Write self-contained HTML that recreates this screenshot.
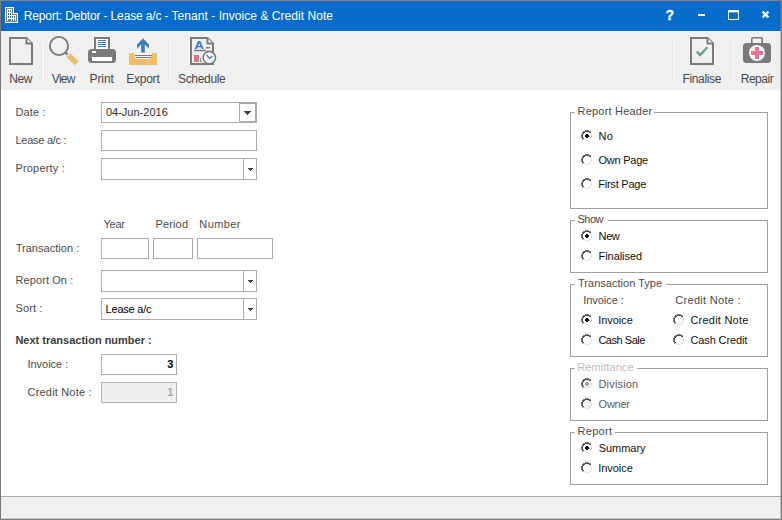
<!DOCTYPE html>
<html lang="en">
<head>
<meta charset="utf-8">
<title>Report: Debtor - Lease a/c - Tenant - Invoice &amp; Credit Note</title>
<style>
html,body{margin:0;padding:0;}
body{width:782px;height:520px;overflow:hidden;background:#fff;font-family:"Liberation Sans",sans-serif;font-size:11px;color:#404040;}
#win{position:absolute;left:0;top:0;width:782px;height:520px;overflow:hidden;background:#fff;}
#win *{box-sizing:border-box;}
.abs{position:absolute;}
#titlebar{position:absolute;left:0;top:0;width:782px;height:31px;background:#066ccb;}
.ttl{position:absolute;height:16px;line-height:16px;font-size:12px;color:#fff;white-space:pre;}
.q{position:absolute;height:18px;line-height:18px;font-size:14px;font-weight:bold;color:#fff;-webkit-text-stroke:0.4px #fff;white-space:nowrap;}
#toolbar{position:absolute;left:0;top:31px;width:782px;height:59px;background:#f0f0f0;}
.tbl{position:absolute;height:16px;line-height:16px;font-size:12px;color:#484848;white-space:nowrap;}
.sep{position:absolute;top:41px;width:3px;height:39px;background:#e6e6e6;border-right:2px solid #f6f6f6;}
.lbl{position:absolute;height:14px;line-height:14px;white-space:nowrap;color:#4a4a4a;}
.lbl.b{color:#3c3c3c;}
.b{font-weight:bold;}
.inp{position:absolute;border:1px solid #ababab;background:#fff;height:21px;}
.inp.off{background:#efefef;border-color:#b4b4b4;}
.txt{position:absolute;height:14px;line-height:14px;color:#2c2c2c;white-space:nowrap;}
.dd{position:absolute;right:0;top:0;bottom:0;width:13px;border-left:1px solid #ababab;}
.dd svg{position:absolute;left:4px;top:9px;}
.ddb{position:absolute;right:0;top:0;bottom:0;width:17px;border:1px solid #ababab;}
.ddb svg{position:absolute;left:4px;top:7px;}
.grp{position:absolute;left:570px;width:198px;border:1px solid #a0a0a0;}
.gap{position:absolute;left:575px;height:3px;background:#fff;}
.cap{position:absolute;height:14px;line-height:14px;white-space:nowrap;color:#4a4a4a;}
.cap.off{color:#bcbcbc;}
.rad{position:absolute;width:12px;height:12px;}
.rad:before,.rad:after{content:"";position:absolute;left:-1px;top:-1px;width:1px;height:1px;}
.rad:before{box-shadow:5px 1px #808080,6px 1px #808080,7px 1px #808080,8px 1px #808080,3px 2px #808080,4px 2px #808080,5px 2px #4a4a4a,6px 2px #4a4a4a,7px 2px #4a4a4a,8px 2px #4a4a4a,9px 2px #808080,10px 2px #808080,2px 3px #808080,3px 3px #4a4a4a,4px 3px #4a4a4a,9px 3px #4a4a4a,10px 3px #4a4a4a,2px 4px #808080,3px 4px #4a4a4a,10px 4px #e0e0e0,1px 5px #808080,2px 5px #4a4a4a,11px 5px #e0e0e0,1px 6px #808080,2px 6px #4a4a4a,11px 6px #e0e0e0,1px 7px #808080,2px 7px #4a4a4a,11px 7px #e0e0e0,1px 8px #808080,2px 8px #4a4a4a,11px 8px #e0e0e0,2px 9px #808080,3px 9px #4a4a4a,10px 9px #e0e0e0,2px 10px #808080,3px 10px #e0e0e0,4px 10px #e0e0e0,9px 10px #e0e0e0,10px 10px #e0e0e0,5px 11px #e0e0e0,6px 11px #e0e0e0,7px 11px #e0e0e0,8px 11px #e0e0e0;}
.rad.dis:before{box-shadow:5px 1px #808080,6px 1px #808080,7px 1px #808080,8px 1px #808080,3px 2px #808080,4px 2px #808080,5px 2px #4a4a4a,6px 2px #4a4a4a,7px 2px #4a4a4a,8px 2px #4a4a4a,9px 2px #808080,10px 2px #808080,2px 3px #808080,3px 3px #4a4a4a,4px 3px #4a4a4a,5px 3px #f0f0f0,6px 3px #f0f0f0,7px 3px #f0f0f0,8px 3px #f0f0f0,9px 3px #4a4a4a,10px 3px #4a4a4a,2px 4px #808080,3px 4px #4a4a4a,4px 4px #f0f0f0,5px 4px #f0f0f0,6px 4px #f0f0f0,7px 4px #f0f0f0,8px 4px #f0f0f0,9px 4px #f0f0f0,10px 4px #e0e0e0,1px 5px #808080,2px 5px #4a4a4a,3px 5px #f0f0f0,4px 5px #f0f0f0,5px 5px #f0f0f0,6px 5px #f0f0f0,7px 5px #f0f0f0,8px 5px #f0f0f0,9px 5px #f0f0f0,10px 5px #f0f0f0,11px 5px #e0e0e0,1px 6px #808080,2px 6px #4a4a4a,3px 6px #f0f0f0,4px 6px #f0f0f0,5px 6px #f0f0f0,6px 6px #f0f0f0,7px 6px #f0f0f0,8px 6px #f0f0f0,9px 6px #f0f0f0,10px 6px #f0f0f0,11px 6px #e0e0e0,1px 7px #808080,2px 7px #4a4a4a,3px 7px #f0f0f0,4px 7px #f0f0f0,5px 7px #f0f0f0,6px 7px #f0f0f0,7px 7px #f0f0f0,8px 7px #f0f0f0,9px 7px #f0f0f0,10px 7px #f0f0f0,11px 7px #e0e0e0,1px 8px #808080,2px 8px #4a4a4a,3px 8px #f0f0f0,4px 8px #f0f0f0,5px 8px #f0f0f0,6px 8px #f0f0f0,7px 8px #f0f0f0,8px 8px #f0f0f0,9px 8px #f0f0f0,10px 8px #f0f0f0,11px 8px #e0e0e0,2px 9px #808080,3px 9px #4a4a4a,4px 9px #f0f0f0,5px 9px #f0f0f0,6px 9px #f0f0f0,7px 9px #f0f0f0,8px 9px #f0f0f0,9px 9px #f0f0f0,10px 9px #e0e0e0,2px 10px #808080,3px 10px #e0e0e0,4px 10px #e0e0e0,5px 10px #f0f0f0,6px 10px #f0f0f0,7px 10px #f0f0f0,8px 10px #f0f0f0,9px 10px #e0e0e0,10px 10px #e0e0e0,5px 11px #e0e0e0,6px 11px #e0e0e0,7px 11px #e0e0e0,8px 11px #e0e0e0;}
.rad.on:after{box-shadow:6px 5px #000,7px 5px #000,5px 6px #000,6px 6px #000,7px 6px #000,8px 6px #000,5px 7px #000,6px 7px #000,7px 7px #000,8px 7px #000,6px 8px #000,7px 8px #000;}
.rad.on.dis:after{box-shadow:6px 5px #a0a0a0,7px 5px #a0a0a0,5px 6px #a0a0a0,6px 6px #a0a0a0,7px 6px #a0a0a0,8px 6px #a0a0a0,5px 7px #a0a0a0,6px 7px #a0a0a0,7px 7px #a0a0a0,8px 7px #a0a0a0,6px 8px #a0a0a0,7px 8px #a0a0a0;}
.rl{position:absolute;height:14px;line-height:14px;white-space:nowrap;color:#101010;}
.rl.off{color:#5a5a5a;}
#status{position:absolute;left:0;top:496px;width:782px;height:24px;background:#f0f0f0;border-top:1px solid #ababab;}
#status:after{content:"";position:absolute;left:1px;top:0;right:2px;bottom:2px;border-right:1px solid #f5f5f5;border-bottom:1px solid #f5f5f5;}
#frame{position:absolute;left:0;top:0;width:782px;height:520px;border:1px solid #7a7a7a;border-top-color:#8f8478;border-right-color:#808080;border-bottom-color:#808080;pointer-events:none;}
#frame:after{content:"";position:absolute;left:0;top:0;right:0;bottom:0;border-right:1px solid rgba(128,128,128,.45);border-bottom:1px solid rgba(128,128,128,.45);}
</style>
</head>
<body>
<div id="win">
<div id="titlebar"></div>
<div id="toolbar"></div>
<div class="sep" style="left:41px"></div>
<div class="sep" style="left:168px"></div>
<div class="sep" style="left:672px"></div>
<div class="sep" style="left:731px"></div>
<svg id="icons" class="abs" style="left:0;top:0" width="782" height="90" viewBox="0 0 782 90">
    <!-- app icon -->
    <g shape-rendering="crispEdges">
      <path d="M5,7H14V13H18V23H5Z" fill="#fff"/>
      <path d="M6.5,8.5H12.5V14.5H16.5V21.5H6.5Z" fill="#fff" stroke="#7f7f7f" stroke-width="1"/>
      <g fill="#2f74c0">
        <rect x="8" y="10" width="1" height="2"/><rect x="10" y="10" width="1" height="2"/>
        <rect x="8" y="13" width="1" height="2"/><rect x="10" y="13" width="1" height="2"/>
        <rect x="8" y="16" width="1" height="2"/><rect x="10" y="16" width="1" height="2"/><rect x="12" y="16" width="1" height="2"/><rect x="14" y="16" width="1" height="2"/>
        <rect x="12" y="19" width="1" height="2"/><rect x="14" y="19" width="1" height="2"/>
      </g>
      <rect x="8" y="19" width="3" height="2" fill="#7f7f7f"/>
    </g>
    <!-- window buttons -->
    <g fill="#fff" shape-rendering="crispEdges">
      <rect x="698" y="14" width="7" height="2"/>
      <path d="M728,10H739V20H728Z M729,12V19H738V12Z" fill-rule="evenodd"/>
      <rect x="729" y="12" width="9" height="1" fill-opacity="0.35"/>
    </g>
    <path d="M763.4,12.4L767.6,16.6M767.6,12.4L763.4,16.6" stroke="#fff" stroke-width="2.2" stroke-linecap="square" fill="none"/>
    <!-- New -->
    <g fill="none" stroke="#7a7a7a" stroke-width="2">
      <path d="M10,38H26.5L32,43.5V64H10Z"/>
      <path d="M26.5,38V43.5H32" fill="#fff"/>
    </g>
    <!-- View -->
    <circle cx="59" cy="46" r="9.1" fill="none" stroke="#767676" stroke-width="1.8"/>
    <path d="M65.2,52.2L67.5,54.5" stroke="#767676" stroke-width="2.4"/>
    <path d="M68.3,55.3L76.7,63.3" stroke="#edbf6a" stroke-width="5.6"/>
    <!-- Print -->
    <g>
      <rect x="95" y="38" width="14" height="12" fill="#fff" stroke="#7a7a7a" stroke-width="2"/>
      <rect x="88" y="49" width="28" height="14" rx="3.5" fill="#7a7a7a"/>
      <g shape-rendering="crispEdges">
        <rect x="92" y="57" width="20" height="4" fill="#fff"/>
        <rect x="92" y="51" width="4" height="2" fill="#fff"/>
        <g fill="#3f7cc4"><rect x="98" y="40" width="8" height="1"/><rect x="98" y="42" width="8" height="1"/><rect x="98" y="44" width="8" height="1"/><rect x="98" y="46" width="8" height="1"/></g>
      </g>
    </g>
    <!-- Export -->
    <g>
      <path d="M129,53H133.5Q134.5,53 134.8,54L136,58Q136.3,59 137.3,59H148.7Q149.7,59 150,58L151.2,54Q151.5,53 152.5,53H157V65H129Z" fill="#edbf6a"/>
      <path d="M134,53.5H152L150.3,58.5H135.7Z" fill="#f5f5f5"/>
      <rect x="134.5" y="55" width="17" height="1" fill="#7a7a7a" shape-rendering="crispEdges"/>
      <rect x="135.5" y="57" width="15" height="1" fill="#7a7a7a" shape-rendering="crispEdges"/>
      <path d="M143,38.3L149,44.8V48.6L144.8,44.6V52.6H141.2V44.6L137,48.6V44.8Z" fill="#3f78bd"/>
    </g>
    <!-- Schedule -->
    <g>
      <path d="M191,38H207.5L213,43.5V64H191Z" fill="none" stroke="#7a7a7a" stroke-width="2"/>
      <path d="M207.5,38V43.5H213" fill="#fff" stroke="#7a7a7a" stroke-width="2"/>
      <text x="194.2" y="48.6" font-family="'Liberation Sans',sans-serif" font-weight="bold" font-size="11.5" fill="#3f78bd" textLength="9.6" lengthAdjust="spacingAndGlyphs">A</text>
      <rect x="194" y="49.8" width="12" height="1.5" fill="#7a7a7a"/>
      <rect x="206" y="47" width="4" height="1.5" fill="#7a7a7a"/>
      <rect x="194" y="55" width="5" height="7" fill="#e6708c"/>
      <path d="M200.5,58V61.5H202" stroke="#5aa287" stroke-width="1" fill="none"/>
      <circle cx="209.3" cy="57.6" r="6.2" fill="#f6f6f6" stroke="#7a7a7a" stroke-width="1.6"/>
      <path d="M206.5,54.8L209.3,58.2L212.6,56.4" fill="none" stroke="#3f78bd" stroke-width="1.3"/>
    </g>
    <!-- Finalise -->
    <g>
      <path d="M691,38H707.5L713,43.5V64H691Z" fill="none" stroke="#7a7a7a" stroke-width="2"/>
      <path d="M707.5,38V43.5H713" fill="#fff" stroke="#7a7a7a" stroke-width="2"/>
      <path d="M696.8,51.6L700.2,55L707.4,47.2" fill="none" stroke="#5fa68e" stroke-width="2.4"/>
    </g>
    <!-- Repair -->
    <g>
      <path d="M751.8,43V38.6Q751.8,37.8 752.6,37.8H761.4Q762.2,37.8 762.2,38.6V43" fill="none" stroke="#7a7a7a" stroke-width="1.6"/>
      <rect x="743" y="43" width="28" height="20" rx="3.5" fill="#7a7a7a"/>
      <circle cx="757" cy="53" r="8" fill="#fafafa"/>
      <path d="M755,47H759V51H763V55H759V59H755V55H751V51H755Z" fill="#e8738f"/>
    </g>
  </svg>
<div class="ttl" id="t_title1" style="left:23.81px;top:8px;letter-spacing:-0.151px;">Report: Debtor - Lease a/c - </div>
<div class="ttl" id="t_title2" style="left:171.59px;top:8px;letter-spacing:0.045px;">Tenant - Invoice &amp; Credit Note</div>
<div class="q" id="t_q" style="left:665.42px;top:6px;">?</div>
<div class="tbl" id="t_tb_new" style="left:9.36px;top:71px;letter-spacing:-0.531px;">New</div>
<div class="tbl" id="t_tb_view" style="left:51.86px;top:71px;letter-spacing:-0.766px;">View</div>
<div class="tbl" id="t_tb_print" style="left:89.45px;top:71px;letter-spacing:-0.052px;">Print</div>
<div class="tbl" id="t_tb_export" style="left:126.16px;top:71px;letter-spacing:-0.225px;">Export</div>
<div class="tbl" id="t_tb_sched" style="left:178.04px;top:71px;letter-spacing:-0.332px;">Schedule</div>
<div class="tbl" id="t_tb_fin" style="left:682.49px;top:71px;letter-spacing:-0.362px;">Finalise</div>
<div class="tbl" id="t_tb_rep" style="left:740.68px;top:71px;letter-spacing:-0.455px;">Repair</div>
<div class="lbl" id="t_date" style="left:15.48px;top:105px;letter-spacing:0.117px;">Date :</div>
<div class="inp" style="left:101px;top:102px;width:156px;height:21px;"><span class="txt" id="t_dateval" style="left:3.94px;top:2px;letter-spacing:0.004px;">04-Jun-2016</span><span class="ddb"><svg width="7" height="4" viewBox="0 0 7 4" shape-rendering="crispEdges"><path d="M0,0H7V1H6V2H5V3H4V4H3V3H2V2H1V1H0Z" fill="#404040"/></svg></span></div>
<div class="lbl" id="t_lease" style="left:15.44px;top:133px;letter-spacing:-0.258px;">Lease a/c :</div>
<div class="inp" style="left:101px;top:130px;width:156px;height:21px;"></div>
<div class="lbl" id="t_prop" style="left:15.44px;top:161px;letter-spacing:0.182px;">Property :</div>
<div class="inp" style="left:101px;top:158px;width:156px;height:22px;"><span class="dd"><svg width="5" height="3" viewBox="0 0 5 3" shape-rendering="crispEdges"><path d="M0,0H5V1H4V2H3V3H2V2H1V1H0Z" fill="#404040"/></svg></span></div>
<div class="lbl" id="t_year" style="left:103.51px;top:217px;letter-spacing:-0.246px;">Year</div>
<div class="lbl" id="t_period" style="left:155.45px;top:217px;letter-spacing:0.155px;">Period</div>
<div class="lbl" id="t_number" style="left:199.35px;top:217px;letter-spacing:0.373px;">Number</div>
<div class="lbl" id="t_trans" style="left:15.63px;top:241px;letter-spacing:0.036px;">Transaction :</div>
<div class="inp" style="left:101px;top:238px;width:48px;height:21px;"></div>
<div class="inp" style="left:153px;top:238px;width:40px;height:21px;"></div>
<div class="inp" style="left:197px;top:238px;width:76px;height:21px;"></div>
<div class="lbl" id="t_repon" style="left:15.46px;top:273px;letter-spacing:0.098px;">Report On :</div>
<div class="inp" style="left:101px;top:270px;width:156px;height:22px;"><span class="dd"><svg width="5" height="3" viewBox="0 0 5 3" shape-rendering="crispEdges"><path d="M0,0H5V1H4V2H3V3H2V2H1V1H0Z" fill="#404040"/></svg></span></div>
<div class="lbl" id="t_sort" style="left:15.51px;top:301px;letter-spacing:0.125px;">Sort :</div>
<div class="inp" style="left:101px;top:298px;width:156px;height:22px;"><span class="txt" id="t_sortval" style="left:3.59px;top:3px;letter-spacing:-0.217px;color:#000;">Lease a/c</span><span class="dd"><svg width="5" height="3" viewBox="0 0 5 3" shape-rendering="crispEdges"><path d="M0,0H5V1H4V2H3V3H2V2H1V1H0Z" fill="#404040"/></svg></span></div>
<div class="lbl b" id="t_next" style="left:15.41px;top:333px;">Next transaction number :</div>
<div class="lbl" id="t_inv" style="left:27.41px;top:357px;letter-spacing:-0.011px;">Invoice :</div>
<div class="inp" style="left:101px;top:354px;width:76px;height:21px;"><span class="txt b" id="t_v3" style="left:65.28px;top:2px;color:#000;">3</span></div>
<div class="lbl" id="t_cn" style="left:27.57px;top:385px;letter-spacing:0.181px;">Credit Note :</div>
<div class="inp off" style="left:101px;top:382px;width:76px;height:21px;"><span class="txt b" id="t_v1" style="left:65.20px;top:2px;color:#a6a6a6;">1</span></div>
<div class="grp" style="top:112px;height:97px;"></div><div class="gap" style="top:111px;width:79px;"></div>
<div class="cap" id="t_g_rh" style="left:577.56px;top:104px;letter-spacing:0.204px;">Report Header</div>
<div class="rad on" style="left:581px;top:130px"></div>
<div class="rl" id="t_r_no" style="left:598.46px;top:129px;letter-spacing:0.435px;">No</div>
<div class="rad" style="left:581px;top:154px"></div>
<div class="rl" id="t_r_own" style="left:598.54px;top:153px;letter-spacing:-0.249px;">Own Page</div>
<div class="rad" style="left:581px;top:178px"></div>
<div class="rl" id="t_r_first" style="left:598.19px;top:177px;letter-spacing:-0.220px;">First Page</div>
<div class="grp" style="top:220px;height:53px;"></div><div class="gap" style="top:219px;width:33px;"></div>
<div class="cap" id="t_g_show" style="left:577.48px;top:212px;letter-spacing:-0.476px;">Show</div>
<div class="rad on" style="left:581px;top:230px"></div>
<div class="rl" id="t_r_new" style="left:598.58px;top:229px;letter-spacing:-0.396px;">New</div>
<div class="rad" style="left:581px;top:250px"></div>
<div class="rl" id="t_r_fin" style="left:598.52px;top:249px;letter-spacing:-0.050px;">Finalised</div>
<div class="grp" style="top:284px;height:73px;"></div><div class="gap" style="top:283px;width:91px;"></div>
<div class="cap" id="t_g_tt" style="left:577.98px;top:276px;letter-spacing:0.026px;">Transaction Type</div>
<div class="lbl" id="t_h_inv" style="left:583.14px;top:293px;letter-spacing:-0.021px;">Invoice :</div>
<div class="lbl" id="t_h_cn" style="left:675.33px;top:293px;letter-spacing:0.296px;">Credit Note :</div>
<div class="rad on" style="left:581px;top:314px"></div>
<div class="rl" id="t_r_inv" style="left:598.28px;top:313px;letter-spacing:-0.056px;">Invoice</div>
<div class="rad" style="left:581px;top:334px"></div>
<div class="rl" id="t_r_cs" style="left:598.38px;top:333px;letter-spacing:-0.463px;">Cash Sale</div>
<div class="rad" style="left:673px;top:314px"></div>
<div class="rl" id="t_r_cn" style="left:690.38px;top:313px;letter-spacing:0.233px;">Credit Note</div>
<div class="rad" style="left:673px;top:334px"></div>
<div class="rl" id="t_r_cc" style="left:690.43px;top:333px;letter-spacing:-0.108px;">Cash Credit</div>
<div class="grp" style="top:368px;height:53px;"></div><div class="gap" style="top:367px;width:62px;"></div>
<div class="cap off" id="t_g_rem" style="left:577.29px;top:360px;letter-spacing:0.069px;">Remittance</div>
<div class="rad on dis" style="left:581px;top:378px"></div>
<div class="rl off" id="t_r_div" style="left:598.46px;top:377px;letter-spacing:0.179px;">Division</div>
<div class="rad dis" style="left:581px;top:398px"></div>
<div class="rl off" id="t_r_own2" style="left:598.58px;top:397px;letter-spacing:-0.248px;">Owner</div>
<div class="grp" style="top:432px;height:53px;"></div><div class="gap" style="top:431px;width:40px;"></div>
<div class="cap" id="t_g_rep" style="left:577.54px;top:424px;letter-spacing:0.283px;">Report</div>
<div class="rad on" style="left:581px;top:442px"></div>
<div class="rl" id="t_r_sum" style="left:598.70px;top:441px;letter-spacing:-0.032px;">Summary</div>
<div class="rad" style="left:581px;top:462px"></div>
<div class="rl" id="t_r_inv2" style="left:598.28px;top:461px;letter-spacing:-0.056px;">Invoice</div>
<div id="status"></div>
<div id="frame"></div>
</div>
</body>
</html>
